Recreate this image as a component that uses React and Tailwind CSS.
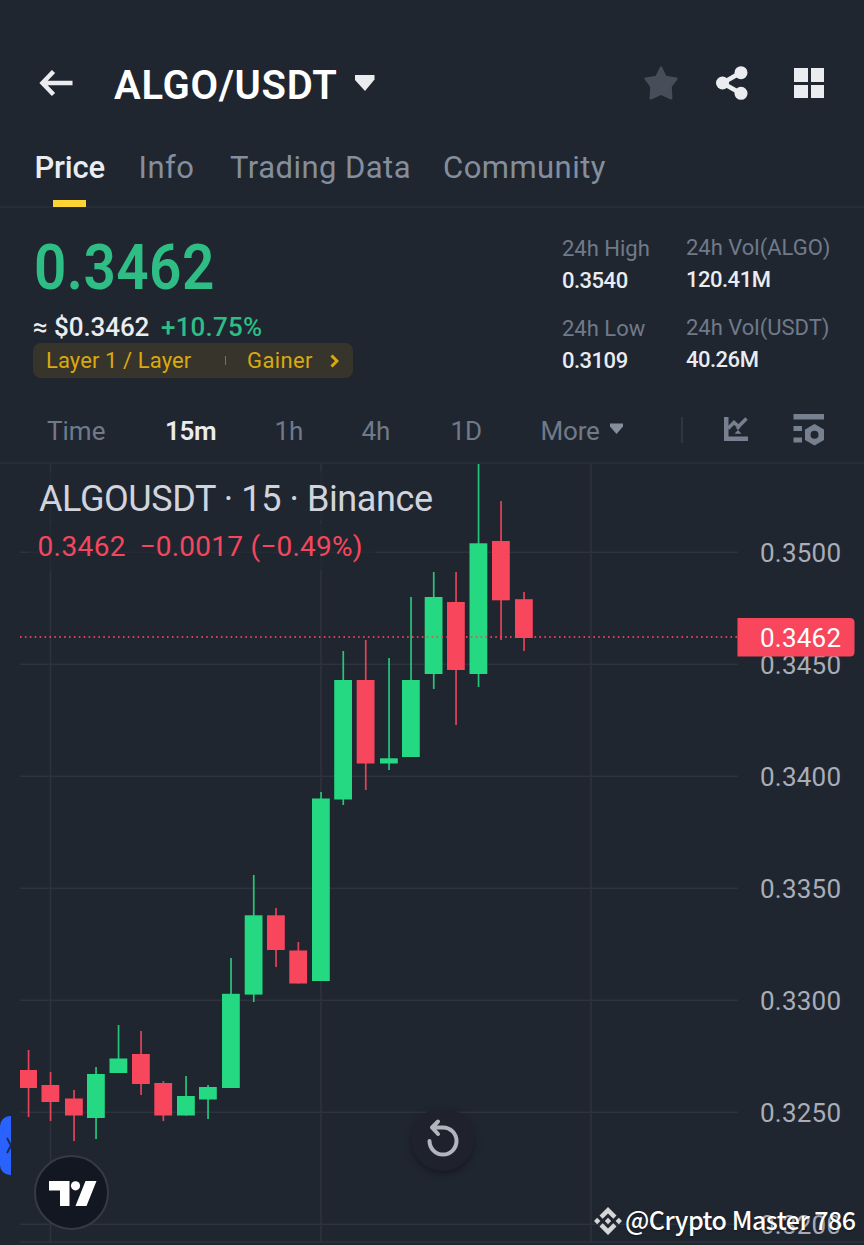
const tabs = ["Price", "Info", "Trading Data", "Community"];
const intervals = ["Time", "15m", "1h", "4h", "1D"];

const stats = [
  [
    { label: "24h High", value: "0.3540" },
    { label: "24h Low", value: "0.3109" },
  ],
  [
    { label: "24h Vol(ALGO)", value: "120.41M" },
    { label: "24h Vol(USDT)", value: "40.26M" },
  ],
];

// x, wick top, body top, body bottom, wick bottom, rising
const candles = [
  [28.5, 1050, 1070, 1088, 1117, false],
  [50.5, 1072, 1085, 1102, 1121, false],
  [74, 1090, 1098.5, 1115.5, 1141, false],
  [96, 1067, 1074, 1118, 1139, true],
  [118.5, 1025, 1058.5, 1073, 1073, true],
  [141, 1031, 1054, 1084, 1095, false],
  [163.3, 1081, 1083, 1115.5, 1121, false],
  [186, 1076, 1096, 1115.5, 1115.5, true],
  [208, 1085, 1087, 1099.5, 1119, true],
  [231, 958, 993.8, 1088, 1088, true],
  [253.7, 875, 915.3, 994.6, 1002, true],
  [276, 908, 915.3, 950, 967, false],
  [298.3, 942, 950.5, 983.5, 983.5, false],
  [321, 792, 798.5, 981, 981, true],
  [343.2, 651, 680, 799.5, 805, true],
  [365.7, 640, 680, 763.5, 790, false],
  [389, 658, 758.3, 763.5, 770, true],
  [411, 597, 680, 757, 757, true],
  [433.7, 572, 597, 674, 689, true],
  [456, 572, 602, 670, 725, false],
  [478.5, 462, 543.3, 674, 687, true],
  [501, 501, 541, 600.3, 640, false],
  [524, 592, 599.2, 638, 651, false],
];

const priceLevels = [
  ["0.3500", 552],
  ["0.3450", 664],
  ["0.3400", 776],
  ["0.3350", 888],
  ["0.3300", 1000],
  ["0.3250", 1112],
  ["0.3200", 1224],
];

function Header() {
  return (
    <header className="flex h-[119px] items-center pt-[49px] pl-[39px] pr-[40px]">
      <svg width="34" height="28" viewBox="0 0 34 28" fill="none" stroke="#eaecef" strokeWidth="4.500" className="-mt-[2px]">
        <path d="M33.500 14H4M14.500 2.500 3.500 14 14.500 25.500" />
      </svg>
      <h1 className="ml-[41px] mt-[4px] w-[225px] whitespace-nowrap text-[40px] leading-[48px] font-semibold tracking-[0.700px] text-white">
        ALGO/USDT
      </h1>
      <svg width="22" height="16" viewBox="0 0 22 16" fill="#eaecef" className="ml-[15px] -mt-[3px]">
        <path d="M1 0H20.500V4.500L11 16 1 5Z" />
      </svg>
      <div className="-mt-[2px] ml-auto flex items-center">
        <svg width="34" height="34" viewBox="0 0 34 34" fill="#474d59" stroke="#474d59" strokeWidth="2.500" strokeLinejoin="round">
          <path d="M17 1.700 21.500 11 32.300 12.800 26.500 20.500 27.200 32.300 17 27.500 6.800 32.300 7.500 20.500 1.700 12.800 12.500 11Z" />
        </svg>
        <svg width="32" height="34" viewBox="0 0 32 34" fill="#eaecef" className="ml-[38px]">
          <path d="M25 6.500 6.500 17 25 27.500" fill="none" stroke="#eaecef" strokeWidth="4.500" />
          <circle cx="6.500" cy="17" r="6.500" />
          <circle cx="25" cy="6.700" r="6.500" />
          <circle cx="25" cy="27.300" r="6.500" />
        </svg>
        <div className="ml-[46px] grid grid-cols-2 gap-[3px]">
          {[0, 1, 2, 3].map((i) => (
            <span key={i} className="size-[13.500px] bg-[#eaecef]" />
          ))}
        </div>
      </div>
    </header>
  );
}

function Tabs() {
  return (
    <nav className="grid h-[89px] grid-cols-[104px_91.500px_213px_1fr] border-b-2 border-[#272d36] pl-[34.500px] pt-[29px]">
      {tabs.map((tab, i) => (
        <button
          key={tab}
          className={`flex flex-col items-start whitespace-nowrap text-[31px] leading-[40px] ${
            i === 0 ? "font-medium tracking-[-0.200px] text-[#eaecef]" : "tracking-[0.450px] text-[#848e9c]"
          }`}
        >
          {tab}
          {i === 0 && <span className="mt-[12px] ml-[18px] h-[7px] w-[33px] bg-[#fcd535]" />}
        </button>
      ))}
    </nav>
  );
}

function Ticker() {
  return (
    <section className="flex h-[190px] pl-[33px]">
      <div className="w-[529px]">
        <div className="ml-px origin-left scale-x-[0.900] pt-[30px] text-[63px] leading-[60px] font-semibold tracking-[0.500px] text-[#2ebd85]">
          0.3462
        </div>
        <div className="mt-[14px] flex text-[26px] leading-[30px] font-medium whitespace-nowrap">
          <span className="w-[128px] tracking-[-0.100px] text-[#eaecef]">≈ $0.3462</span>
          <span className="tracking-[0.200px] text-[#2ebd85]">+10.75%</span>
        </div>
        <div className="mt-px flex h-[35px] w-[320px] items-center rounded-[8px] bg-[#37342c] pl-[13px] text-[22px] text-[#d9a90f]">
          <span className="w-[179px] whitespace-nowrap tracking-[0.100px]">Layer 1 / Layer</span>
          <span className="h-[9px] w-px bg-[#8d731c]" />
          <span className="ml-[21px] w-[83px] tracking-[0.400px]">Gainer</span>
          <svg width="9" height="14" viewBox="0 0 9 14" fill="none" stroke="#d9a90f" strokeWidth="3">
            <path d="M1.500 1.500 7 7 1.500 12.500" />
          </svg>
        </div>
      </div>
      {stats.map((column, i) => (
        <dl
          key={i}
          className={`whitespace-nowrap text-[22px] leading-[32px] ${i === 0 ? "w-[124px] pt-[25px]" : "pt-[24px]"}`}
        >
          {column.map((stat) => (
            <div key={stat.label} className="h-[80px]">
              <dt className="text-[#707a89]">{stat.label}</dt>
              <dd className="font-medium tracking-[-0.500px] text-[#eaecef]">{stat.value}</dd>
            </div>
          ))}
        </dl>
      ))}
    </section>
  );
}

function Intervals() {
  return (
    <div className="flex h-[66px] items-center border-b-2 border-[#272d36] pl-[47px] text-[26px] text-[#707a89]">
      <div className="grid grid-cols-[118px_109.500px_87px_89px_90px] pt-[2px]">
        {intervals.map((item) => (
          <button
            key={item}
            className={`text-left ${item === "15m" ? "font-semibold tracking-[-0.400px] text-[#eaecef]" : ""}`}
          >
            {item}
          </button>
        ))}
      </div>
      <span className="w-[68.500px] pt-[2px] tracking-[-0.200px]">More</span>
      <svg width="15" height="12" viewBox="0 0 15 12" fill="#848e9c" className="-mt-[3px]">
        <path d="M1 0.500H14V3.500L7.500 11 1 3.500Z" />
      </svg>
      <span className="ml-[57px] h-[26px] w-[2px] bg-[#2f3641]" />
      <svg width="25" height="26" viewBox="0 0 25 26" fill="none" stroke="#76808f" strokeWidth="4.500" className="-mt-[2px] ml-[41px]">
        <path d="M2.250 1V22.750H24" />
        <path d="M4 12.500 10 6.500 14.500 10.500 22.500 2.500" strokeWidth="3.500" />
        <path d="M10.500 17.800 14 14 11.500 11.500H16.500L14 14 17.500 17.800Z" fill="#76808f" stroke="none" />
      </svg>
      <svg width="32" height="34" viewBox="0 0 32 34" fill="#76808f" className="ml-[44px]">
        <path d="M0.500 1H31V6.500H0.500ZM0.500 13H9V18H0.500ZM0.500 24.500H9V29.500H0.500Z" />
        <path fillRule="evenodd" d="M21.500 11 31 16.500V27L21.500 32.500 12 27V16.500ZM21.500 17.800A4 4 0 1 0 21.500 25.800 4 4 0 0 0 21.500 17.800Z" />
      </svg>
    </div>
  );
}

function Chart() {
  return (
    <svg viewBox="0 464 864 781" className="block h-[781px] w-[864px] overflow-hidden">
      <g stroke="#2d333d" strokeWidth="1.600">
        {priceLevels.map(([label, y]) => (
          <path key={label} d={`M20 ${y + 0.25}H738`} />
        ))}
        {[50.5, 321, 591].map((x) => (
          <path key={x} d={`M${x} 464V1242`} />
        ))}
        <path d="M20 1242H864" />
      </g>

      {/* Legend */}
      <rect x="30" y="471" width="410" height="50" fill="#202630" opacity="0.6" />
      <rect x="30" y="523" width="346" height="47" fill="#202630" opacity="0.6" />
      <text x="39" y="511" fontSize="36" fill="#d1d4dc" textLength="394">
        ALGOUSDT · 15 · Binance
      </text>
      <g fontSize="28" fill="#f6465d">
        <text x="37.5" y="556" textLength="88">0.3462</text>
        <text x="139.5" y="556" textLength="223">−0.0017 (−0.49%)</text>
      </g>

      {candles.map(([x, high, top, bottom, low, up]) => (
        <g key={x} fill={up ? "#25d882" : "#f8465d"}>
          <rect x={x - 0.8} y={high} width="1.700" height={low - high} opacity="0.9" />
          <rect x={x === 28.5 ? 20 : x - 9} y={top} width={x === 28.5 ? 17 : 17.8} height={bottom - top} />
        </g>
      ))}

      <path d="M20 637H738" stroke="#f6465d" strokeWidth="2" strokeDasharray="1.600 3.300" opacity="0.85" />

      {/* Price scale */}
      <g fontSize="26" fill="#a9adb8">
        {priceLevels.map(([label, y]) => (
          <text key={label} x="760" y={y + 9.5} textLength="81">
            {label}
          </text>
        ))}
        <path d="M737.500 618H850Q854.500 618 854.500 622.500V652Q854.500 656.500 850 656.500H737.500Z" fill="#f8465d" />
        <text x="760" y="646.500" textLength="81" fill="#fff">
          0.3462
        </text>
      </g>
    </svg>
  );
}

function ChartOverlays() {
  return (
    <>
      <button className="absolute top-[1116px] left-0 flex h-[59px] w-[11px] items-center justify-end rounded-l-[10px] bg-[#2962ff]">
        <svg width="5" height="17" viewBox="0 0 5 17" fill="none" stroke="#1e2a4a" strokeWidth="2">
          <path d="M1 1 5 8.500 1 16" />
        </svg>
      </button>

      <div className="absolute top-[1155px] left-[34px] flex size-[75px] items-center justify-center rounded-full border-2 border-[#363a45] bg-[#131722]">
        <svg width="48" height="25" viewBox="0 0 48 25" fill="#fff" className="mt-[2px] ml-[2px]">
          <path d="M0 0H20.500V25H11V9.500H0ZM36.500 0H47.500L37.500 25H26.500Z" />
          <circle cx="26.500" cy="4.800" r="4.600" />
        </svg>
      </div>

      <button className="absolute top-[1108px] left-[411px] flex size-[63px] items-center justify-center rounded-full bg-[#1f222d] shadow-[0_3px_6px_rgba(15,17,25,0.600)]">
        <svg width="34" height="40" viewBox="0 0 34 40" fill="none" stroke="#b2b5be" strokeWidth="4" strokeLinecap="round" strokeLinejoin="round" className="-mt-[4px]">
          <path d="M3.500 23A13.500 13.500 0 1 0 17 9.500H6M12 3.500 6 9.500 12 16" />
        </svg>
      </button>

      <div className="absolute top-[1202px] left-[594px] flex items-center font-['Noto_Sans_CJK_SC','Noto_Sans',sans-serif] text-[25px] leading-[34px] whitespace-nowrap text-white">
        <svg width="28" height="28" viewBox="0 0 28 28" fill="#d5d6d8" className="mt-[3px] mr-[3px]">
          <path d="M14 0 22.500 8.500 19.300 11.700 14 6.400 8.700 11.700 5.500 8.500ZM14 28 22.500 19.500 19.300 16.300 14 21.600 8.700 16.300 5.500 19.500ZM3.200 10.800 6.400 14 3.200 17.200 0 14ZM24.800 10.800 28 14 24.800 17.200 21.600 14ZM14 10.800 17.200 14 14 17.200 10.800 14Z" />
        </svg>
        <span className="font-medium tracking-[-0.480px] [text-shadow:0_1px_2px_rgba(0,0,0,0.500)]">@Crypto Master 786</span>
      </div>
    </>
  );
}

export default function App() {
  return (
    <main className="relative h-[1245px] w-[864px] overflow-hidden bg-[#202630] font-['Roboto',sans-serif]">
      <Header />
      <Tabs />
      <Ticker />
      <Intervals />
      <Chart />
      <ChartOverlays />
    </main>
  );
}
